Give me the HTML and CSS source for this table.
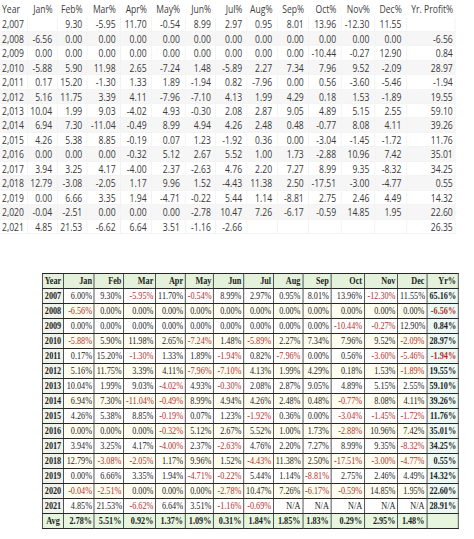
FILE: index.html
```html
<!DOCTYPE html>
<html>
<head>
<meta charset="utf-8">
<link rel="stylesheet" href="styles.css">
</head>
<body>
<div class="frame">
<div class="page">
<table class="grid">
<colgroup>
<col class="g0"><col class="g1"><col class="g2"><col class="g3"><col class="g4"><col class="g5"><col class="g6"><col class="g7"><col class="g8"><col class="g9"><col class="g10"><col class="g11"><col class="g12"><col class="g13">
</colgroup>
<thead>
<tr><th class="y">Year</th><th>Jan%</th><th>Feb%</th><th>Mar%</th><th>Apr%</th><th>May%</th><th>Jun%</th><th>Jul%</th><th>Aug%</th><th>Sep%</th><th>Oct%</th><th>Nov%</th><th>Dec%</th><th class="last">Yr. Profit%</th></tr>
</thead>
<tbody>
<tr><td class="y">2,007</td><td></td><td>9.30</td><td>-5.95</td><td>11.70</td><td>-0.54</td><td>8.99</td><td>2.97</td><td>0.95</td><td>8.01</td><td>13.96</td><td>-12.30</td><td>11.55</td><td class="last"></td></tr>
<tr><td class="y">2,008</td><td>-6.56</td><td>0.00</td><td>0.00</td><td>0.00</td><td>0.00</td><td>0.00</td><td>0.00</td><td>0.00</td><td>0.00</td><td>0.00</td><td>0.00</td><td>0.00</td><td class="last">-6.56</td></tr>
<tr><td class="y">2,009</td><td>0.00</td><td>0.00</td><td>0.00</td><td>0.00</td><td>0.00</td><td>0.00</td><td>0.00</td><td>0.00</td><td>0.00</td><td>-10.44</td><td>-0.27</td><td>12.90</td><td class="last">0.84</td></tr>
<tr><td class="y">2,010</td><td>-5.88</td><td>5.90</td><td>11.98</td><td>2.65</td><td>-7.24</td><td>1.48</td><td>-5.89</td><td>2.27</td><td>7.34</td><td>7.96</td><td>9.52</td><td>-2.09</td><td class="last">28.97</td></tr>
<tr><td class="y">2,011</td><td>0.17</td><td>15.20</td><td>-1.30</td><td>1.33</td><td>1.89</td><td>-1.94</td><td>0.82</td><td>-7.96</td><td>0.00</td><td>0.56</td><td>-3.60</td><td>-5.46</td><td class="last">-1.94</td></tr>
<tr><td class="y">2,012</td><td>5.16</td><td>11.75</td><td>3.39</td><td>4.11</td><td>-7.96</td><td>-7.10</td><td>4.13</td><td>1.99</td><td>4.29</td><td>0.18</td><td>1.53</td><td>-1.89</td><td class="last">19.55</td></tr>
<tr><td class="y">2,013</td><td>10.04</td><td>1.99</td><td>9.03</td><td>-4.02</td><td>4.93</td><td>-0.30</td><td>2.08</td><td>2.87</td><td>9.05</td><td>4.89</td><td>5.15</td><td>2.55</td><td class="last">59.10</td></tr>
<tr><td class="y">2,014</td><td>6.94</td><td>7.30</td><td>-11.04</td><td>-0.49</td><td>8.99</td><td>4.94</td><td>4.26</td><td>2.48</td><td>0.48</td><td>-0.77</td><td>8.08</td><td>4.11</td><td class="last">39.26</td></tr>
<tr><td class="y">2,015</td><td>4.26</td><td>5.38</td><td>8.85</td><td>-0.19</td><td>0.07</td><td>1.23</td><td>-1.92</td><td>0.36</td><td>0.00</td><td>-3.04</td><td>-1.45</td><td>-1.72</td><td class="last">11.76</td></tr>
<tr><td class="y">2,016</td><td>0.00</td><td>0.00</td><td>0.00</td><td>-0.32</td><td>5.12</td><td>2.67</td><td>5.52</td><td>1.00</td><td>1.73</td><td>-2.88</td><td>10.96</td><td>7.42</td><td class="last">35.01</td></tr>
<tr><td class="y">2,017</td><td>3.94</td><td>3.25</td><td>4.17</td><td>-4.00</td><td>2.37</td><td>-2.63</td><td>4.76</td><td>2.20</td><td>7.27</td><td>8.99</td><td>9.35</td><td>-8.32</td><td class="last">34.25</td></tr>
<tr><td class="y">2,018</td><td>12.79</td><td>-3.08</td><td>-2.05</td><td>1.17</td><td>9.96</td><td>1.52</td><td>-4.43</td><td>11.38</td><td>2.50</td><td>-17.51</td><td>-3.00</td><td>-4.77</td><td class="last">0.55</td></tr>
<tr><td class="y">2,019</td><td>0.00</td><td>6.66</td><td>3.35</td><td>1.94</td><td>-4.71</td><td>-0.22</td><td>5.44</td><td>1.14</td><td>-8.81</td><td>2.75</td><td>2.46</td><td>4.49</td><td class="last">14.32</td></tr>
<tr><td class="y">2,020</td><td>-0.04</td><td>-2.51</td><td>0.00</td><td>0.00</td><td>0.00</td><td>-2.78</td><td>10.47</td><td>7.26</td><td>-6.17</td><td>-0.59</td><td>14.85</td><td>1.95</td><td class="last">22.60</td></tr>
<tr><td class="y">2,021</td><td>4.85</td><td>21.53</td><td>-6.62</td><td>6.64</td><td>3.51</td><td>-1.16</td><td>-2.66</td><td></td><td></td><td></td><td></td><td></td><td class="last">26.35</td></tr>
</tbody>
</table>

<table class="report">
<colgroup>
<col class="r0"><col class="r1"><col class="r2"><col class="r3"><col class="r4"><col class="r5"><col class="r6"><col class="r7"><col class="r8"><col class="r9"><col class="r10"><col class="r11"><col class="r12"><col class="r13">
</colgroup>
<thead>
<tr><th class="yc">Year</th><th>Jan</th><th>Feb</th><th>Mar</th><th>Apr</th><th>May</th><th>Jun</th><th>Jul</th><th>Aug</th><th>Sep</th><th>Oct</th><th>Nov</th><th>Dec</th><th>Yr%</th></tr>
</thead>
<tbody>
<tr><th class="yc">2007</th><td>6.00%</td><td>9.30%</td><td class="neg">-5.95%</td><td>11.70%</td><td class="neg">-0.54%</td><td>8.99%</td><td>2.97%</td><td>0.95%</td><td>8.01%</td><td>13.96%</td><td class="neg">-12.30%</td><td>11.55%</td><td class="tot">65.16%</td></tr>
<tr><th class="yc">2008</th><td class="neg">-6.56%</td><td>0.00%</td><td>0.00%</td><td>0.00%</td><td>0.00%</td><td>0.00%</td><td>0.00%</td><td>0.00%</td><td>0.00%</td><td>0.00%</td><td>0.00%</td><td>0.00%</td><td class="tot neg">-6.56%</td></tr>
<tr><th class="yc">2009</th><td>0.00%</td><td>0.00%</td><td>0.00%</td><td>0.00%</td><td>0.00%</td><td>0.00%</td><td>0.00%</td><td>0.00%</td><td>0.00%</td><td class="neg">-10.44%</td><td class="neg">-0.27%</td><td>12.90%</td><td class="tot">0.84%</td></tr>
<tr><th class="yc">2010</th><td class="neg">-5.88%</td><td>5.90%</td><td>11.98%</td><td>2.65%</td><td class="neg">-7.24%</td><td>1.48%</td><td class="neg">-5.89%</td><td>2.27%</td><td>7.34%</td><td>7.96%</td><td>9.52%</td><td class="neg">-2.09%</td><td class="tot">28.97%</td></tr>
<tr><th class="yc">2011</th><td>0.17%</td><td>15.20%</td><td class="neg">-1.30%</td><td>1.33%</td><td>1.89%</td><td class="neg">-1.94%</td><td>0.82%</td><td class="neg">-7.96%</td><td>0.00%</td><td>0.56%</td><td class="neg">-3.60%</td><td class="neg">-5.46%</td><td class="tot neg">-1.94%</td></tr>
<tr><th class="yc">2012</th><td>5.16%</td><td>11.75%</td><td>3.39%</td><td>4.11%</td><td class="neg">-7.96%</td><td class="neg">-7.10%</td><td>4.13%</td><td>1.99%</td><td>4.29%</td><td>0.18%</td><td>1.53%</td><td class="neg">-1.89%</td><td class="tot">19.55%</td></tr>
<tr><th class="yc">2013</th><td>10.04%</td><td>1.99%</td><td>9.03%</td><td class="neg">-4.02%</td><td>4.93%</td><td class="neg">-0.30%</td><td>2.08%</td><td>2.87%</td><td>9.05%</td><td>4.89%</td><td>5.15%</td><td>2.55%</td><td class="tot">59.10%</td></tr>
<tr><th class="yc">2014</th><td>6.94%</td><td>7.30%</td><td class="neg">-11.04%</td><td class="neg">-0.49%</td><td>8.99%</td><td>4.94%</td><td>4.26%</td><td>2.48%</td><td>0.48%</td><td class="neg">-0.77%</td><td>8.08%</td><td>4.11%</td><td class="tot">39.26%</td></tr>
<tr><th class="yc">2015</th><td>4.26%</td><td>5.38%</td><td>8.85%</td><td class="neg">-0.19%</td><td>0.07%</td><td>1.23%</td><td class="neg">-1.92%</td><td>0.36%</td><td>0.00%</td><td class="neg">-3.04%</td><td class="neg">-1.45%</td><td class="neg">-1.72%</td><td class="tot">11.76%</td></tr>
<tr><th class="yc">2016</th><td>0.00%</td><td>0.00%</td><td>0.00%</td><td class="neg">-0.32%</td><td>5.12%</td><td>2.67%</td><td>5.52%</td><td>1.00%</td><td>1.73%</td><td class="neg">-2.88%</td><td>10.96%</td><td>7.42%</td><td class="tot">35.01%</td></tr>
<tr><th class="yc">2017</th><td>3.94%</td><td>3.25%</td><td>4.17%</td><td class="neg">-4.00%</td><td>2.37%</td><td class="neg">-2.63%</td><td>4.76%</td><td>2.20%</td><td>7.27%</td><td>8.99%</td><td>9.35%</td><td class="neg">-8.32%</td><td class="tot">34.25%</td></tr>
<tr><th class="yc">2018</th><td>12.79%</td><td class="neg">-3.08%</td><td class="neg">-2.05%</td><td>1.17%</td><td>9.96%</td><td>1.52%</td><td class="neg">-4.43%</td><td>11.38%</td><td>2.50%</td><td class="neg">-17.51%</td><td class="neg">-3.00%</td><td class="neg">-4.77%</td><td class="tot">0.55%</td></tr>
<tr><th class="yc">2019</th><td>0.00%</td><td>6.66%</td><td>3.35%</td><td>1.94%</td><td class="neg">-4.71%</td><td class="neg">-0.22%</td><td>5.44%</td><td>1.14%</td><td class="neg">-8.81%</td><td>2.75%</td><td>2.46%</td><td>4.49%</td><td class="tot">14.32%</td></tr>
<tr><th class="yc">2020</th><td class="neg">-0.04%</td><td class="neg">-2.51%</td><td>0.00%</td><td>0.00%</td><td>0.00%</td><td class="neg">-2.78%</td><td>10.47%</td><td>7.26%</td><td class="neg">-6.17%</td><td class="neg">-0.59%</td><td>14.85%</td><td>1.95%</td><td class="tot">22.60%</td></tr>
<tr><th class="yc">2021</th><td>4.85%</td><td>21.53%</td><td class="neg">-6.62%</td><td>6.64%</td><td>3.51%</td><td class="neg">-1.16%</td><td class="neg">-0.69%</td><td>N/A</td><td>N/A</td><td>N/A</td><td>N/A</td><td>N/A</td><td class="tot">28.91%</td></tr>
</tbody>
<tfoot>
<tr><th class="yc">Avg</th><td>2.78%</td><td>5.51%</td><td>0.92%</td><td>1.37%</td><td>1.09%</td><td>0.31%</td><td>1.84%</td><td>1.85%</td><td>1.83%</td><td>0.29%</td><td>2.95%</td><td>1.48%</td><td></td></tr>
</tfoot>
</table>
</div>
</div>
</body>
</html>
```

FILE: styles.css
```css
html, body {
  margin: 0;
  padding: 0;
  background: #ffffff;
}

.frame {
  width: 100%;
  overflow: hidden;
}

.page {
  width: 596px;
  transform: scaleX(0.78);
  transform-origin: 0 0;
}

/* ---------- top grid (spreadsheet view) ---------- */
.grid {
  border-collapse: collapse;
  table-layout: fixed;
  width: 584px;
  font-family: "Open Sans", "Noto Sans", sans-serif;
  font-size: 11px;
  color: #3a3a3a;
}

.grid .g0 { width: 35.5px; }
.grid .g1 { width: 37.9px; }
.grid .g2 { width: 38.5px; }
.grid .g3 { width: 42.8px; }
.grid .g4 { width: 39.7px; }
.grid .g5 { width: 42.7px; }
.grid .g6 { width: 39.7px; }
.grid .g7 { width: 40.1px; }
.grid .g8 { width: 38.5px; }
.grid .g9 { width: 40.6px; }
.grid .g10 { width: 41.4px; }
.grid .g11 { width: 42.8px; }
.grid .g12 { width: 41px; }
.grid .g13 { width: 62.8px; }

.grid th,
.grid td {
  padding: 0 6px 0 0;
  text-align: right;
  white-space: nowrap;
  overflow: hidden;
}

.grid th {
  font-weight: normal;
  line-height: 17.3px;
  color: #404040;
}

.grid td {
  line-height: 13.46px;
  border-left: 1px solid #efefef;
  border-bottom: 1px solid #f4f4f4;
}

.grid .y {
  text-align: left;
  padding-left: 2.6px;
  border-left: none;
}

.grid .last {
  padding-right: 3px;
  border-right: 1px solid #efefef;
}

.grid th.last {
  border-right: none;
}

.grid tbody tr:nth-child(even) td {
  background: #f6f6f6;
}

/* ---------- bottom report table ---------- */
.report {
  margin: 38.8px 0 0 53.8px;
  border-collapse: collapse;
  table-layout: fixed;
  width: 533.5px;
  font-family: "Liberation Serif", "Times New Roman", serif;
  font-size: 10.5px;
  color: #1e1e1e;
  border: 1px solid #555555;
}

.report .r0 { width: 27.3px; }
.report .r1 { width: 39.4px; }
.report .r2 { width: 37.6px; }
.report .r3 { width: 41px; }
.report .r4 { width: 38.1px; }
.report .r5 { width: 36.3px; }
.report .r6 { width: 38.5px; }
.report .r7 { width: 38.1px; }
.report .r8 { width: 37.6px; }
.report .r9 { width: 36.4px; }
.report .r10 { width: 42.7px; }
.report .r11 { width: 42.7px; }
.report .r12 { width: 37.2px; }
.report .r13 { width: 40.6px; }

.report th,
.report td {
  border: 1px solid #262626;
  padding: 0 2.5px;
  line-height: 14px;
  text-align: right;
  white-space: nowrap;
}

.report thead th {
  background: #e4f2dc;
  font-weight: bold;
}

.report th.yc {
  text-align: center;
  padding: 0 1px;
  background: #eef4ec;
  font-weight: bold;
}

.report thead th.yc {
  background: #e4f2dc;
}

.report tbody tr:nth-child(even) td {
  background: #fffdf0;
}

.report td.neg {
  color: #b3312c;
}

.report td.tot {
  font-weight: bold;
}

.report tbody td.tot,
.report tbody tr:nth-child(even) td.tot {
  background: #ecf8f4;
}

.report tfoot td,
.report tfoot th.yc {
  background: #e6f5de;
  font-weight: bold;
}
```
